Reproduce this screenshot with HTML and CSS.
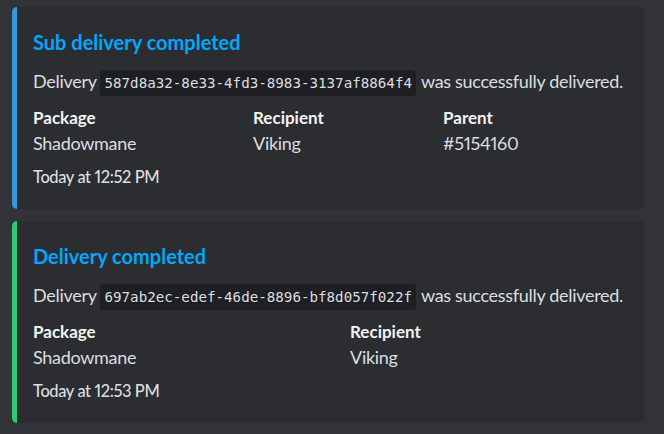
FILE: index.html
```html
<!DOCTYPE html>
<html>
<head>
<meta charset="utf-8">
<link rel="stylesheet" href="styles.css">
</head>
<body>
<div class="feed">
  <div class="embed embed-blue">
    <div class="title">Sub delivery completed</div>
    <div class="desc">Delivery <code>587d8a32-8e33-4fd3-8983-3137af8864f4</code> was successfully delivered.</div>
    <div class="fields fields-3">
      <div class="field"><div class="fname">Package</div><div class="fvalue">Shadowmane</div></div>
      <div class="field"><div class="fname">Recipient</div><div class="fvalue">Viking</div></div>
      <div class="field"><div class="fname">Parent</div><div class="fvalue">#5154160</div></div>
    </div>
    <div class="stamp">Today at 12:52 PM</div>
  </div>
  <div class="embed embed-green">
    <div class="title">Delivery completed</div>
    <div class="desc">Delivery <code>697ab2ec-edef-46de-8896-bf8d057f022f</code> was successfully delivered.</div>
    <div class="fields fields-2">
      <div class="field"><div class="fname">Package</div><div class="fvalue">Shadowmane</div></div>
      <div class="field"><div class="fname">Recipient</div><div class="fvalue">Viking</div></div>
    </div>
    <div class="stamp">Today at 12:53 PM</div>
  </div>
  <div class="embed embed-blue embed-peek"></div>
</div>
</body>
</html>
```
FILE: styles.css
```css
html, body {
  margin: 0;
  padding: 0;
  background: #313338;
  overflow: hidden;
}
body {
  font-family: "Lato", "Noto Sans", sans-serif;
  color: #dbdee1;
  font-variant-numeric: proportional-nums;
}
.feed {
  display: flex;
  flex-direction: column;
  gap: 12px;
  padding: 7px 20px 0 12px;
}
.embed {
  background: #2b2d31;
  border-left: 5px solid #3498db;
  border-radius: 5px;
  padding: 22px 16px 22px 16px;
}
.embed-blue { border-left-color: #3498db; }
.embed-green { border-left-color: #2ecc71; }
.embed-peek { height: 40px; padding: 0; }
.title {
  font-size: 20px;
  line-height: 26px;
  font-weight: 700;
  color: #00a8fc;
}
.desc {
  margin-top: 13px;
  font-size: 18px;
  line-height: 26px;
  letter-spacing: -0.3px;
  white-space: nowrap;
}
code {
  font-family: "DejaVu Sans Mono", "Liberation Mono", monospace;
  font-size: 14.2px;
  line-height: 16px;
  letter-spacing: 0;
  background: #1e1f22;
  border-radius: 4px;
  padding: 5px 4px;
  margin-right: 1px;
  color: #dbdee1;
}
.fields {
  display: grid;
  margin-top: 12px;
}
.fields-3 { grid-template-columns: 220px 190px 1fr; }
.fields-2 { grid-template-columns: 317px 1fr; }
.fname {
  font-size: 17px;
  line-height: 24px;
  font-weight: 700;
  color: #f2f3f5;
}
.fvalue {
  margin-top: 1px;
  font-size: 18px;
  line-height: 24px;
  letter-spacing: -0.3px;
}
.stamp {
  margin-top: 12px;
  font-size: 16.5px;
  line-height: 20px;
  font-weight: 500;
  letter-spacing: -0.4px;
}
```
